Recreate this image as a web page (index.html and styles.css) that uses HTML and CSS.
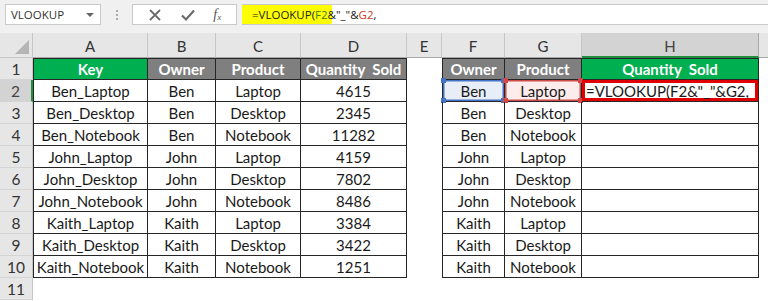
FILE: index.html
```html
<!DOCTYPE html>
<html>
<head>
<meta charset="utf-8">
<link rel="stylesheet" href="styles.css">
</head>
<body>
<div class="app">
  <div class="toolbar">
    <div class="namebox"><span>VLOOKUP</span><span class="caret"></span></div>
    <div class="grip"><i></i><i></i><i></i></div>
    <div class="btns">
      <svg class="ico" width="14" height="14" viewBox="0 0 14 14"><path d="M2 2 L12 12 M12 2 L2 12" stroke="#6b6b6b" stroke-width="1.8" fill="none"/></svg>
      <svg class="ico" width="16" height="14" viewBox="0 0 16 14"><path d="M2 7.5 L6 11.5 L14 2.5" stroke="#6b6b6b" stroke-width="2.2" fill="none"/></svg>
      <span class="fx">f<sub>x</sub></span>
    </div>
    <div class="fbar"><span class="hl">=VLOOKUP(<span class="rf">F2</span>&amp;"_"&amp;<span class="rg">G2</span>,<span class="cur"></span></span></div>
  </div>
  <div class="sheet">
    <div class="corner"><span class="tri"></span></div>
    <div class="ch">A</div><div class="ch">B</div><div class="ch">C</div><div class="ch">D</div><div class="ch">E</div><div class="ch">F</div><div class="ch">G</div><div class="ch chs">H</div><div class="ch end"></div>

    <div class="rh">1</div>
    <div class="c cl ct hg">Key</div><div class="c ct hd">Owner</div><div class="c ct hd">Product</div><div class="c ct hd">Quantity&nbsp; Sold</div><div class="e"></div>
    <div class="c cl ct hd">Owner</div><div class="c ct hd">Product</div><div class="c ct hg">Quantity&nbsp; Sold</div><div class="e"></div>

    <div class="rh rhs">2</div>
    <div class="c cl">Ben_Laptop</div><div class="c">Ben</div><div class="c">Laptop</div><div class="c">4615</div><div class="e"></div>
    <div class="c cl self">Ben<i class="h tl"></i><i class="h tr"></i><i class="h bl"></i><i class="h br"></i></div><div class="c selg">Laptop<i class="h tl"></i><i class="h tr"></i><i class="h bl"></i><i class="h br"></i></div><div class="c edit">=VLOOKUP(F2&amp;"_"&amp;G2,</div><div class="e"></div>

    <div class="rh">3</div>
    <div class="c cl">Ben_Desktop</div><div class="c">Ben</div><div class="c">Desktop</div><div class="c">2345</div><div class="e"></div>
    <div class="c cl">Ben</div><div class="c">Desktop</div><div class="c"></div><div class="e"></div>

    <div class="rh">4</div>
    <div class="c cl">Ben_Notebook</div><div class="c">Ben</div><div class="c">Notebook</div><div class="c">11282</div><div class="e"></div>
    <div class="c cl">Ben</div><div class="c">Notebook</div><div class="c"></div><div class="e"></div>

    <div class="rh">5</div>
    <div class="c cl">John_Laptop</div><div class="c">John</div><div class="c">Laptop</div><div class="c">4159</div><div class="e"></div>
    <div class="c cl">John</div><div class="c">Laptop</div><div class="c"></div><div class="e"></div>

    <div class="rh">6</div>
    <div class="c cl">John_Desktop</div><div class="c">John</div><div class="c">Desktop</div><div class="c">7802</div><div class="e"></div>
    <div class="c cl">John</div><div class="c">Desktop</div><div class="c"></div><div class="e"></div>

    <div class="rh">7</div>
    <div class="c cl">John_Notebook</div><div class="c">John</div><div class="c">Notebook</div><div class="c">8486</div><div class="e"></div>
    <div class="c cl">John</div><div class="c">Notebook</div><div class="c"></div><div class="e"></div>

    <div class="rh">8</div>
    <div class="c cl">Kaith_Laptop</div><div class="c">Kaith</div><div class="c">Laptop</div><div class="c">3384</div><div class="e"></div>
    <div class="c cl">Kaith</div><div class="c">Laptop</div><div class="c"></div><div class="e"></div>

    <div class="rh">9</div>
    <div class="c cl">Kaith_Desktop</div><div class="c">Kaith</div><div class="c">Desktop</div><div class="c">3422</div><div class="e"></div>
    <div class="c cl">Kaith</div><div class="c">Desktop</div><div class="c"></div><div class="e"></div>

    <div class="rh">10</div>
    <div class="c cl">Kaith_Notebook</div><div class="c">Kaith</div><div class="c">Notebook</div><div class="c">1251</div><div class="e"></div>
    <div class="c cl">Kaith</div><div class="c">Notebook</div><div class="c"></div><div class="e"></div>

    <div class="rh">11</div>
    <div class="e span"></div>
  </div>
</div>
</body>
</html>
```
FILE: styles.css
```css
* { box-sizing: border-box; }
html, body { margin: 0; padding: 0; }
body {
  width: 768px;
  height: 301px;
  overflow: hidden;
  background: #ffffff;
  font-family: Lato, "Open Sans", sans-serif;
  color: #1a1a1a;
}
.app { width: 768px; }

.toolbar {
  height: 33px;
  background: #f0f0f0;
  display: flex;
  align-items: flex-start;
  padding: 4px 0 0 5px;
}
.namebox {
  width: 96px;
  height: 21px;
  background: #fff;
  border: 1px solid #c9c9c9;
  display: flex;
  align-items: center;
  justify-content: space-between;
  padding: 0 6px 0 5px;
  font-family: "Open Sans", sans-serif;
  font-size: 11.5px;
  color: #333;
}
.caret {
  width: 0; height: 0;
  border-left: 4px solid transparent;
  border-right: 4px solid transparent;
  border-top: 4px solid #666;
}
.grip {
  width: 31px;
  height: 21px;
  display: flex;
  flex-direction: column;
  align-items: center;
  justify-content: center;
  gap: 2px;
}
.grip i { display: block; width: 2px; height: 2px; background: #aaa; }
.btns {
  width: 105px;
  height: 21px;
  background: #fff;
  border: 1px solid #c9c9c9;
  display: flex;
  align-items: center;
  justify-content: space-around;
  padding: 0 6px 0 6px;
}
.fx {
  font-family: "Liberation Serif", serif;
  font-style: italic;
  font-size: 14px;
  color: #555;
  line-height: 1;
}
.fx sub { font-size: 9px; vertical-align: -1px; }
.fbar {
  margin-left: 5px;
  flex: 1;
  height: 21px;
  background: #fff;
  border-top: 1px solid #c9c9c9;
  border-bottom: 1px solid #c9c9c9;
  display: flex;
  align-items: stretch;
}
.hl {
  background: #ffff00;
  width: 90px;
  padding-left: 10px;
  display: flex;
  align-items: center;
  font-family: "Open Sans", sans-serif;
  font-size: 11.5px;
  color: #222;
  white-space: nowrap;
}
.rf { color: #3f7d2a; }
.rg { color: #d0401a; }
.cur { display: inline-block; width: 1px; height: 14px; background: #000; margin-left: 1px; }

.sheet {
  display: grid;
  grid-template-columns: 33px 115px 68px 85px 106px 35px 63px 77px 177px 9px;
  grid-template-rows: 25px repeat(11, 22px);
}
.corner {
  background: #e6e6e6;
  border-right: 1px solid #c6c6c6;
  border-bottom: 1px solid #c6c6c6;
  position: relative;
}
.tri {
  position: absolute;
  right: 3px;
  bottom: 3px;
  width: 0; height: 0;
  border-left: 14px solid transparent;
  border-bottom: 14px solid #b5b5b5;
}
.ch {
  background: #e6e6e6;
  border-right: 1px solid #c6c6c6;
  border-bottom: 1px solid #a9a9a9;
  display: flex;
  align-items: center;
  justify-content: center;
  font-size: 15px;
  color: #333;
  padding-top: 2px;
}
.ch.chs { background: #d3d3d3; border-bottom: 2px solid #1e8e3e; color: #444; border-right-color: #a9a9a9; }
.ch.end { background: #e6e6e6; border-right: none; }
.rh {
  background: #e6e6e6;
  border-right: 1px solid #c6c6c6;
  border-bottom: 1px solid #d4d4d4;
  display: flex;
  align-items: center;
  justify-content: center;
  font-size: 15.5px;
  color: #333;
}
.rh.rhs { background: #d3d3d3; border-right: 2px solid #1e8e3e; color: #444; }
.c {
  border-right: 1px solid #262626;
  border-bottom: 1px solid #262626;
  display: flex;
  align-items: center;
  justify-content: center;
  font-size: 15px;
  white-space: nowrap;
  color: #1a1a1a;
  position: relative;
}
.cl { border-left: 1px solid #262626; }
.ct { border-top: 1px solid #262626; }
.hg { background: #00b050; color: #fff; font-weight: bold; }
.hd { background: #7f7f7f; color: #fff; font-weight: bold; }
.e { background: #fff; }
.span { grid-column: 2 / -1; }

.self {
  background: #e8eef8;
  box-shadow: inset 0 0 0 1.5px #4472c4;
}
.selg {
  background: #fcecec;
  box-shadow: inset 0 0 0 1.5px #d04a4a;
}
.h { position: absolute; width: 5px; height: 5px; }
.self .h { background: #4472c4; }
.selg .h { background: #d04a4a; }
.tl { left: -2px; top: -2px; }
.tr { right: -2px; top: -2px; }
.bl { left: -2px; bottom: -2px; }
.br { right: -2px; bottom: -2px; }
.edit {
  justify-content: flex-start;
  padding-left: 4px;
  box-shadow: inset 0 0 0 3px #e00000;
  font-size: 15px;
}
```
